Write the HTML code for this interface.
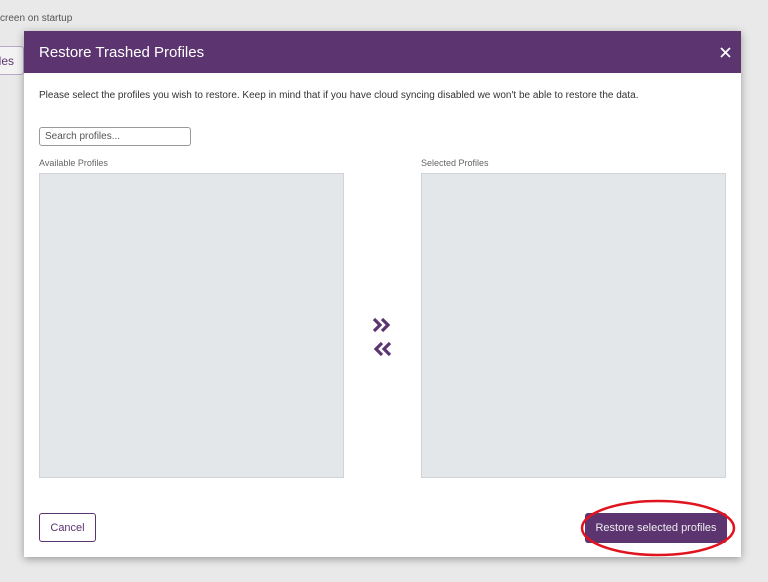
<!DOCTYPE html>
<html><head><style>
body{margin:0;width:768px;height:582px;background:#e9e9e9;font-family:"Liberation Sans",sans-serif;position:relative;overflow:hidden}
.a{position:absolute}
</style></head><body>
<div class="a" style="left:0;top:13px;font-size:10px;color:#555">creen on startup</div>
<div class="a" style="left:-10px;top:46px;width:34px;height:29px;border:1px solid #b9a9c6;border-radius:3px;background:#f3f3f3;font-size:12px;color:#5c3470;line-height:29px;text-align:right;padding-right:9px;box-sizing:border-box">iles</div>
<div class="a" style="left:24px;top:31px;width:717px;height:526px;background:#fff;box-shadow:0 2px 8px rgba(0,0,0,.35)">
 <div class="a" style="left:0;top:0;width:717px;height:42px;background:#5c3470"></div>
 <div class="a" style="left:15px;top:13px;font-size:15px;color:#fff">Restore Trashed Profiles</div>
 <svg class="a" style="left:696px;top:16px" width="11" height="11" viewBox="0 0 11 11"><path d="M1 1l9 9M10 1l-9 9" stroke="#fff" stroke-width="1.8"/></svg>
 <div class="a" style="left:15px;top:59px;font-size:10px;color:#333">Please select the profiles you wish to restore. Keep in mind that if you have cloud syncing disabled we won't be able to restore the data.</div>
 <div class="a" style="left:15px;top:96px;width:152px;height:19px;border:1px solid #999;border-radius:3px;box-sizing:border-box;font-size:10px;color:#555;line-height:17px;padding-left:5px">Search profiles...</div>
 <div class="a" style="left:15px;top:127px;font-size:9px;color:#666">Available Profiles</div>
 <div class="a" style="left:397px;top:127px;font-size:9px;color:#666">Selected Profiles</div>
 <div class="a" style="left:15px;top:142px;width:305px;height:305px;background:#e4e7ea;border:1px solid #d0d4d8;box-sizing:border-box"></div>
 <div class="a" style="left:397px;top:142px;width:305px;height:305px;background:#e4e7ea;border:1px solid #d0d4d8;box-sizing:border-box"></div>
 <svg class="a" style="left:348px;top:286px" width="22" height="40" viewBox="0 0 22 40"><g fill="none" stroke="#5c3470" stroke-width="3.2"><path d="M2 2l6 6-6 6M10 2l6 6-6 6"/><path d="M10 26l-6 6 6 6M18 26l-6 6 6 6"/></g></svg>
 <div class="a" style="left:15px;top:482px;width:57px;height:29px;border:1px solid #5c3470;border-radius:3px;box-sizing:border-box;font-size:11px;color:#5c3470;text-align:center;line-height:28px">Cancel</div>
 <div class="a" style="left:561px;top:482px;width:142px;height:30px;background:#5c3470;border-radius:3px;font-size:11px;color:#eee;text-align:center;line-height:30px">Restore selected profiles</div>
</div>
<svg class="a" style="left:0;top:0" width="768" height="582"><ellipse cx="658" cy="528" rx="76" ry="27" fill="none" stroke="#e0141e" stroke-width="2.5"/></svg>
</body></html>
